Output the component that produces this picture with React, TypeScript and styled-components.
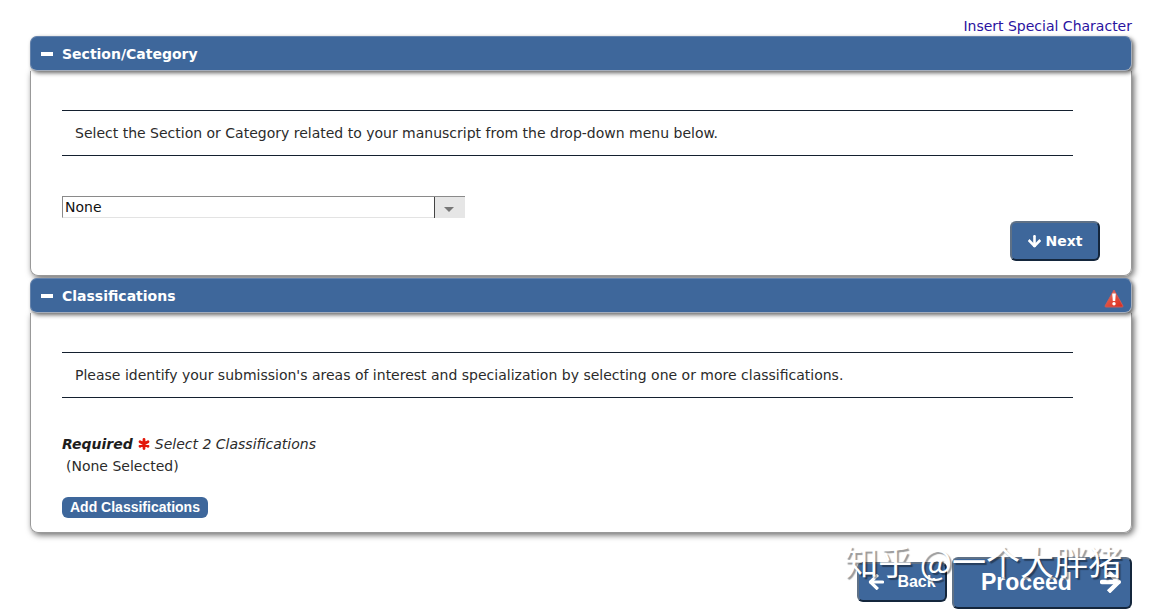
import React from 'react';
import styled, { createGlobalStyle } from 'styled-components';

const GlobalStyle = createGlobalStyle`
  * { box-sizing: border-box; }
  body {
    margin: 0;
    background: #fff;
    color: #2b2b2b;
    font: 14px/22px Verdana, 'DejaVu Sans', sans-serif;
    overflow-x: hidden;
  }
`;

const Page = styled.main`
  padding: 15px 20px 0 30px;
`;

const TopBar = styled.div`
  display: flex;
  justify-content: flex-end;
  height: 21px;
`;

const TopLink = styled.a`
  color: #2a13a0;
  text-decoration: none;
`;

const Panel = styled.section`
  margin-bottom: 2px;
`;

const PanelHeader = styled.header`
  position: relative;
  display: flex;
  align-items: center;
  height: 35px;
  padding: 0 7px 0 10px;
  background: #3e679b;
  border: 1px solid #a4adbb;
  border-top-color: #6482ab;
  border-left-color: #6482ab;
  border-radius: 7px;
  box-shadow: 2px 2px 4px rgba(0, 0, 0, 0.6);
`;

const CollapseButton = styled.button`
  display: flex;
  flex: 1;
  align-items: center;
  gap: 9px;
  padding: 0;
  border: 0;
  background: none;
  color: #fff;
  font: bold 14px/20px Verdana, 'DejaVu Sans', sans-serif;
`;

const MinusIcon = styled.span`
  width: 12px;
  height: 4px;
  background: #fff;
`;

const PanelBody = styled.div`
  padding: 39px 31px 14px;
  border: 1px solid #999;
  border-top: 0;
  border-radius: 0 0 8px 8px;
  box-shadow: 2px 2px 6px rgba(0, 0, 0, 0.6);
`;

const Instructions = styled.p<{ $gap: number }>`
  margin: 0 27px ${p => p.$gap}px 0;
  padding: 11px 13px;
  border: solid #14202f;
  border-width: 1px 0;
`;

const SelectBox = styled.div`
  position: relative;
  width: 403px;
  max-width: 100%;
  height: 22px;
`;

const Select = styled.select`
  appearance: none;
  display: block;
  width: 100%;
  height: 22px;
  padding: 0 32px 0 2px;
  border: 1px solid #8a8a8a;
  border-right: 0;
  border-bottom-color: #e3e3e3;
  border-radius: 0;
  background: #fff;
  color: #111;
  font: inherit;
  line-height: 20px;
`;

const SelectArrow = styled.span`
  position: absolute;
  top: 1px;
  right: 0;
  bottom: 0;
  display: flex;
  align-items: center;
  justify-content: center;
  width: 31px;
  padding: 4px 2px 0 0;
  background: #e6e6e6;
  border-left: 1px solid #444;
  pointer-events: none;
`;

const ButtonRow = styled.div`
  display: flex;
  justify-content: flex-end;
  gap: 5px;
`;

const NextRow = styled(ButtonRow)`
  padding-top: 3px;
`;

const FooterRow = styled(ButtonRow)`
  position: relative;
  padding-top: 22px;
  align-items: baseline;
`;

const ActionButton = styled.button<{ $large?: boolean; $sans?: boolean }>`
  display: flex;
  align-items: center;
  justify-content: ${p => (p.$large ? 'space-between' : 'center')};
  gap: ${p => (p.$sans ? 13 : 5)}px;
  width: ${p => (p.$large ? 180 : 90)}px;
  height: ${p => (p.$large ? 52 : 40)}px;
  padding: ${p => (p.$large ? '0 8px 2px 27px' : '0')};
  background: #3e679b;
  border: 2px solid #14263c;
  border-top-color: #5f7186;
  border-left-color: #5f7186;
  border-radius: 6px;
  color: #fff;
  font-family: ${p => (p.$sans ? "'Liberation Sans', Arial, sans-serif" : "Verdana, 'DejaVu Sans', sans-serif")};
  font-size: ${p => (p.$large ? 23 : p.$sans ? 16 : 14)}px;
  font-weight: bold;
`;

const Required = styled.div`
  display: flex;
  align-items: center;
  gap: 5px;
  font-style: italic;
  strong { color: #1d1d1d; }
`;

const NoneSelected = styled.div`
  padding-left: 4px;
`;

const AddButton = styled.button`
  display: block;
  height: 21px;
  margin-top: 20px;
  padding: 0 8px;
  border: 0;
  border-radius: 6px;
  background: #3e679b;
  color: #fff;
  font: bold 14px/21px 'Liberation Sans', Arial, sans-serif;
`;

const Watermark = styled.span`
  position: absolute;
  top: 4px;
  right: 10px;
  color: #fff;
  font: 34px/44px 'Noto Sans CJK SC', sans-serif;
  text-shadow: 2px 2px 1px rgba(0, 0, 0, 0.4);
  white-space: nowrap;
  pointer-events: none;
`;

const WarningSvg = styled.svg`
  margin-top: 5px;
`;

function WarningIcon() {
  return (
    <WarningSvg width="20" height="19" viewBox="0 0 20 19" role="img" aria-label="Warning">
      <defs>
        <linearGradient id="warn" x1="0" y1="0" x2="1" y2="1">
          <stop offset="0" stopColor="#f0a090" />
          <stop offset="0.45" stopColor="#e2503f" />
          <stop offset="1" stopColor="#d92a1c" />
        </linearGradient>
      </defs>
      <path d="M10 1 L19 17 Q19.200 18 18 18 H2 Q.8 18 1 17 Z" fill="url(#warn)" stroke="#c85a58" strokeWidth="1" strokeLinejoin="round" />
      <path d="M8.200 4.500 H11.800 L11.200 12 H8.800 Z" fill="#fff" />
      <circle cx="10" cy="14.700" r="1.700" fill="#fff" />
    </WarningSvg>
  );
}

const turns = { left: 0, right: 180, down: 270 };

function Arrow({ size, to }: { size: number; to: keyof typeof turns }) {
  return (
    <svg width={size} height={size} viewBox="0 0 16 16" aria-hidden="true">
      <g transform={`rotate(${turns[to]} 8 8)`} fill="none" stroke="#fff" strokeWidth="3.200" strokeLinejoin="round">
        <path d="M2.500 8H14.500" strokeLinecap="round" />
        <path d="M8.700 1.900L2.500 8L8.700 14.100" strokeLinecap="square" />
      </g>
    </svg>
  );
}

function Asterisk() {
  return (
    <svg width="12" height="12" viewBox="0 0 12 12" aria-hidden="true">
      <path d="M6 1.500V10.500M2 3.700L10 8.300M10 3.700L2 8.300" stroke="#e3170a" strokeWidth="2.800" strokeLinecap="round" />
    </svg>
  );
}

function Header({ title, warning }: { title: string; warning?: boolean }) {
  return (
    <PanelHeader>
      <CollapseButton type="button" aria-expanded="true">
        <MinusIcon />
        {title}
      </CollapseButton>
      {warning && <WarningIcon />}
    </PanelHeader>
  );
}

export default function App() {
  return (
    <>
      <GlobalStyle />
      <Page>
        <TopBar>
          <TopLink href="#">Insert Special Character</TopLink>
        </TopBar>
        <Panel>
          <Header title="Section/Category" />
          <PanelBody>
            <Instructions $gap={40}>
              Select the Section or Category related to your manuscript from the drop-down menu below.
            </Instructions>
            <SelectBox>
              <Select aria-label="Section/Category" defaultValue="None">
                <option>None</option>
              </Select>
              <SelectArrow>
                <svg width="10" height="5" viewBox="0 0 10 5">
                  <path d="M0 0H10L5 5Z" fill="#777" />
                </svg>
              </SelectArrow>
            </SelectBox>
            <NextRow>
              <ActionButton type="button">
                <Arrow size={13} to="down" />
                Next
              </ActionButton>
            </NextRow>
          </PanelBody>
        </Panel>
        <Panel>
          <Header title="Classifications" warning />
          <PanelBody>
            <Instructions $gap={35}>
              Please identify your submission's areas of interest and specialization by selecting one or more
              classifications.
            </Instructions>
            <Required>
              <strong>Required</strong>
              <Asterisk />
              <span>Select 2 Classifications</span>
            </Required>
            <NoneSelected>(None Selected)</NoneSelected>
            <AddButton type="button">Add Classifications</AddButton>
          </PanelBody>
        </Panel>
        <FooterRow>
          <ActionButton type="button" $sans>
            <Arrow size={16} to="left" />
            Back
          </ActionButton>
          <ActionButton type="button" $sans $large>
            Proceed
            <Arrow size={22} to="right" />
          </ActionButton>
          <Watermark>知乎 @一个大胖猪</Watermark>
        </FooterRow>
      </Page>
    </>
  );
}
